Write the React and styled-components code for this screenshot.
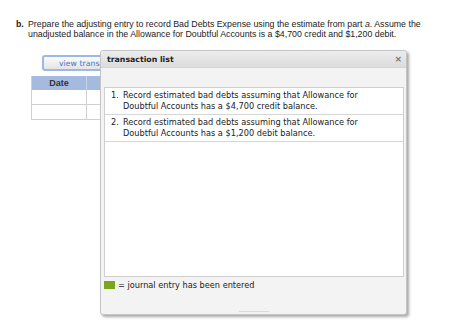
import React from "react";
import styled, { createGlobalStyle } from "styled-components";

const GlobalStyle = createGlobalStyle`
  html, body {
    margin: 0;
    padding: 0;
    background: #ffffff;
  }
`;

const Page = styled.div`
  position: relative;
  width: 474px;
  height: 334px;
  overflow: hidden;
  padding: 19px 0 0 16px;
  box-sizing: border-box;
  font-family: "Liberation Sans", Arial, sans-serif;
  color: #222;
`;

const Question = styled.div`
  display: flex;
  font-size: 8.8px;
  line-height: 10px;
  width: 410px;
`;

const Letter = styled.b`
  width: 12px;
  flex-shrink: 0;
`;

const Work = styled.div`
  display: flex;
  flex-direction: column;
  margin: 16px 0 0 15px;
`;

const ViewButton = styled.button`
  margin-left: 11px;
  width: 96px;
  height: 16px;
  border: 2px solid #9cb8e6;
  border-radius: 3px;
  background: linear-gradient(#fbfbfb, #e4e4e4);
  color: #3c74c8;
  font-family: "DejaVu Sans", Verdana, sans-serif;
  font-size: 7.8px;
  padding: 0 0 0 15px;
  text-align: left;
  white-space: nowrap;
  box-sizing: border-box;
`;

const Table = styled.div`
  margin-top: 5px;
  display: grid;
  grid-template-columns: 55px 80px;
  border-left: 1px solid #d0d0d0;
  width: 136px;
`;

const HeadCell = styled.div`
  height: 14px;
  background: #a6badf;
  border-right: 1px solid #c8d3ea;
  font-size: 9px;
  font-weight: bold;
  color: #333;
  text-align: center;
  line-height: 14px;
`;

const Cell = styled.div`
  height: 14px;
  border-right: 1px solid #d0d0d0;
  border-bottom: 1px solid #d0d0d0;
`;

const Dialog = styled.div`
  position: absolute;
  left: 100px;
  top: 50px;
  width: 307px;
  height: 265px;
  background: #f3f3f3;
  border: 1px solid #c4c4c4;
  border-radius: 3px;
  box-shadow: 2px 2px 3px rgba(0, 0, 0, 0.35);
  display: flex;
  flex-direction: column;
  box-sizing: border-box;
  font-family: "DejaVu Sans", Verdana, sans-serif;
`;

const TitleBar = styled.div`
  height: 16px;
  display: flex;
  align-items: center;
  justify-content: space-between;
  padding: 0 4px 0 6px;
  background: linear-gradient(#ececec, #dcdcdc);
  border-bottom: 1px solid #d4d4d4;
  border-radius: 3px 3px 0 0;
  font-size: 7.8px;
  font-weight: bold;
  color: #222;
`;

const Close = styled.span`
  font-size: 9px;
  color: #777;
  font-weight: bold;
`;

const Body = styled.div`
  flex: 1;
  display: flex;
  flex-direction: column;
  padding: 19px 2px 0 3px;
`;

const List = styled.div`
  height: 190px;
  background: #ffffff;
  border: 1px solid #cfcfcf;
  box-sizing: border-box;
`;

const Item = styled.div`
  display: flex;
  padding: 2px 0 2px 6px;
  border-bottom: 1px solid #d6d6d6;
  font-size: 8.2px;
  line-height: 11px;
  color: #222;
`;

const Num = styled.span`
  width: 12px;
  flex-shrink: 0;
`;

const Legend = styled.div`
  display: flex;
  align-items: center;
  gap: 3px;
  margin-top: 3px;
  font-size: 8.2px;
  color: #222;
`;

const Swatch = styled.span`
  width: 11px;
  height: 8px;
  background: #7aa61e;
`;

const Grip = styled.div`
  margin: auto auto 2px;
  width: 30px;
  height: 1px;
  background: #dadada;
`;

const items = [
  ["Record estimated bad debts assuming that Allowance for", "Doubtful Accounts has a $4,700 credit balance."],
  ["Record estimated bad debts assuming that Allowance for", "Doubtful Accounts has a $1,200 debit balance."],
];

export default function App() {
  return (
    <Page>
      <GlobalStyle />
      <Question>
        <Letter>b.</Letter>
        <span>
          Prepare the adjusting entry to record Bad Debts Expense using the estimate from part <i>a</i>. Assume the
          unadjusted balance in the Allowance for Doubtful Accounts is a $4,700 credit and $1,200 debit.
        </span>
      </Question>
      <Work>
        <ViewButton>view transaction list</ViewButton>
        <Table>
          <HeadCell>Date</HeadCell>
          <HeadCell />
          <Cell />
          <Cell />
          <Cell />
          <Cell />
        </Table>
      </Work>
      <Dialog>
        <TitleBar>
          <span>transaction list</span>
          <Close>×</Close>
        </TitleBar>
        <Body>
          <List>
            {items.map((lines, i) => (
              <Item key={i}>
                <Num>{i + 1}.</Num>
                <span>
                  {lines[0]}
                  <br />
                  {lines[1]}
                </span>
              </Item>
            ))}
          </List>
          <Legend>
            <Swatch />
            <span>= journal entry has been entered</span>
          </Legend>
          <Grip />
        </Body>
      </Dialog>
    </Page>
  );
}
